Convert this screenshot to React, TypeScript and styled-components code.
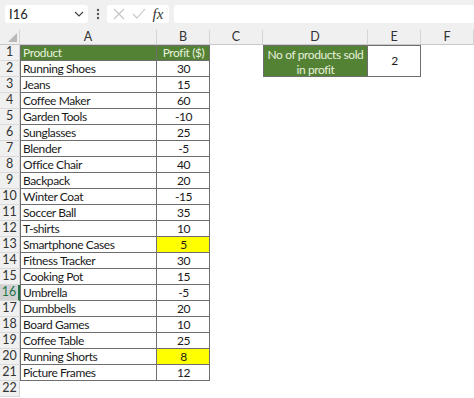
import React from "react";
import styled, { createGlobalStyle } from "styled-components";

const Global = createGlobalStyle`
  html, body { margin: 0; padding: 0; background: #ffffff; }
  body { font-family: Lato, "Open Sans", "Liberation Sans", sans-serif; }
`;

const Page = styled.div`
  width: 474px;
  height: 398px;
  overflow: hidden;
  display: flex;
  flex-direction: column;
  background: #ffffff;
`;

const FormulaBar = styled.div`
  height: 30px;
  box-sizing: border-box;
  background: #f0f0f0;
  display: flex;
  align-items: flex-start;
  padding: 5px 0 0 5px;
`;

const NameBox = styled.div`
  width: 83px;
  height: 18px;
  box-sizing: border-box;
  background: #ffffff;
  border-radius: 3px;
  display: flex;
  align-items: center;
  justify-content: space-between;
  padding: 0 4px 0 4px;
  font-size: 13px;
  color: #222;
`;

const Dots = styled.div`
  width: 19px;
  display: flex;
  justify-content: center;
  align-items: center;
  height: 18px;
`;

const FxBox = styled.div`
  width: 62px;
  height: 18px;
  box-sizing: border-box;
  background: #ffffff;
  border-radius: 3px;
  display: flex;
  align-items: center;
  justify-content: space-around;
  padding: 0 2px;
`;

const FxText = styled.span`
  font-family: "Liberation Serif", serif;
  font-style: italic;
  font-size: 15px;
  color: #333;
`;

const Input = styled.div`
  flex: 1;
  height: 18px;
  margin-left: 5px;
  background: #ffffff;
  border-radius: 3px 0 0 3px;
`;

const Sheet = styled.div`
  display: grid;
  grid-template-columns: 20px 137px 53px 53px 105px 53px 53px;
  grid-template-rows: 15px repeat(22, 16px);
  font-size: 12px;
  letter-spacing: -0.4px;
  color: #1a1a1a;
`;

const ColHead = styled.div`
  background: #f0f0f0;
  border-right: 1px solid #d4d4d4;
  border-bottom: 1px solid #c8c8c8;
  box-sizing: border-box;
  display: flex;
  align-items: center;
  justify-content: center;
  font-size: 12.5px;
  letter-spacing: 0;
  color: #333;
  line-height: 1;
`;

const Corner = styled(ColHead)`
  position: relative;
  &::after {
    content: "";
    position: absolute;
    right: 2px;
    bottom: 2px;
    width: 0;
    height: 0;
    border-left: 9px solid transparent;
    border-bottom: 9px solid #b8b8b8;
  }
`;

const RowHead = styled.div<{ $sel?: boolean }>`
  background: ${(p) => (p.$sel ? "#d2d2d2" : "#f0f0f0")};
  border-right: ${(p) => (p.$sel ? "2px solid #217346" : "1px solid #d4d4d4")};
  border-bottom: 1px solid #dadada;
  box-sizing: border-box;
  display: flex;
  align-items: center;
  justify-content: center;
  font-size: 12.5px;
  letter-spacing: 0;
  color: ${(p) => (p.$sel ? "#217346" : "#333")};
  line-height: 1;
`;

type CellProps = {
  $bordered?: boolean;
  $top?: boolean;
  $left?: boolean;
  $fill?: string;
  $color?: string;
  $align?: "left" | "center";
  $span?: number;
};

const Cell = styled.div<CellProps>`
  box-sizing: border-box;
  background: ${(p) => p.$fill || "#ffffff"};
  color: ${(p) => p.$color || "#1a1a1a"};
  display: flex;
  align-items: center;
  justify-content: ${(p) => (p.$align === "left" ? "flex-start" : "center")};
  text-align: center;
  padding: 0 3px;
  line-height: 16px;
  white-space: nowrap;
  ${(p) => (p.$span ? `grid-row: span ${p.$span};` : "")}
  box-shadow: ${(p) =>
    p.$bordered
      ? [
          "inset -1px -1px 0 #6e6e6e",
          p.$top ? "inset 0 1px 0 #6e6e6e" : null,
          p.$left ? "inset 1px 0 0 #6e6e6e" : null,
        ]
          .filter(Boolean)
          .join(", ")
      : "none"};
`;

const WrapCell = styled(Cell)`
  line-height: 15px;
  padding-top: 1px;
`;

const GREEN = "#548235";
const LIGHT = "#e6f0dc";
const YELLOW = "#ffff00";

const data: [string, number, boolean?][] = [
  ["Running Shoes", 30],
  ["Jeans", 15],
  ["Coffee Maker", 60],
  ["Garden Tools", -10],
  ["Sunglasses", 25],
  ["Blender", -5],
  ["Office Chair", 40],
  ["Backpack", 20],
  ["Winter Coat", -15],
  ["Soccer Ball", 35],
  ["T-shirts", 10],
  ["Smartphone Cases", 5, true],
  ["Fitness Tracker", 30],
  ["Cooking Pot", 15],
  ["Umbrella", -5],
  ["Dumbbells", 20],
  ["Board Games", 10],
  ["Coffee Table", 25],
  ["Running Shorts", 8, true],
  ["Picture Frames", 12],
];

const cols = ["A", "B", "C", "D", "E", "F"];

export default function App() {
  const rows: React.ReactNode[] = [];
  rows.push(<RowHead key="h1">1</RowHead>);
  rows.push(
    <Cell key="a1" $bordered $top $left $fill={GREEN} $color={LIGHT} $align="left">
      Product
    </Cell>
  );
  rows.push(
    <Cell key="b1" $bordered $top $fill={GREEN} $color={LIGHT}>
      Profit ($)
    </Cell>
  );
  rows.push(<Cell key="c1" />);
  rows.push(
    <WrapCell key="d1" $span={2} $bordered $top $left $fill={GREEN} $color={LIGHT}>
      No of products sold
      <br />
      in profit
    </WrapCell>
  );
  rows.push(
    <Cell key="e1" $span={2} $bordered $top>
      2
    </Cell>
  );
  rows.push(<Cell key="f1" />);

  data.forEach(([name, profit, hl], i) => {
    const r = i + 2;
    rows.push(
      <RowHead key={`h${r}`} $sel={r === 16}>
        {r}
      </RowHead>
    );
    rows.push(
      <Cell key={`a${r}`} $bordered $left $align="left">
        {name}
      </Cell>
    );
    rows.push(
      <Cell key={`b${r}`} $bordered $fill={hl ? YELLOW : undefined}>
        {profit}
      </Cell>
    );
    rows.push(<Cell key={`c${r}`} />);
    if (r !== 2) {
      rows.push(<Cell key={`d${r}`} />);
      rows.push(<Cell key={`e${r}`} />);
    }
    rows.push(<Cell key={`f${r}`} />);
  });

  rows.push(<RowHead key="h22">22</RowHead>);
  for (let c = 0; c < 6; c++) rows.push(<Cell key={`x${c}`} />);

  return (
    <Page>
      <Global />
      <FormulaBar>
        <NameBox>
          <span>I16</span>
          <svg width="10" height="6" viewBox="0 0 10 6">
            <path d="M1 1 L5 5 L9 1" fill="none" stroke="#444" strokeWidth="1.2" />
          </svg>
        </NameBox>
        <Dots>
          <svg width="4" height="12" viewBox="0 0 4 12">
            <circle cx="2" cy="2" r="1.2" fill="#555" />
            <circle cx="2" cy="6" r="1.2" fill="#555" />
            <circle cx="2" cy="10" r="1.2" fill="#555" />
          </svg>
        </Dots>
        <FxBox>
          <svg width="12" height="12" viewBox="0 0 12 12">
            <path d="M1 1 L11 11 M11 1 L1 11" stroke="#c4c4c4" strokeWidth="1.1" />
          </svg>
          <svg width="14" height="12" viewBox="0 0 14 12">
            <path d="M1 6 L5 10 L13 1" fill="none" stroke="#c4c4c4" strokeWidth="1.1" />
          </svg>
          <FxText>fx</FxText>
        </FxBox>
        <Input />
      </FormulaBar>
      <Sheet>
        <Corner />
        {cols.map((c) => (
          <ColHead key={c}>{c}</ColHead>
        ))}
        {rows}
      </Sheet>
    </Page>
  );
}
